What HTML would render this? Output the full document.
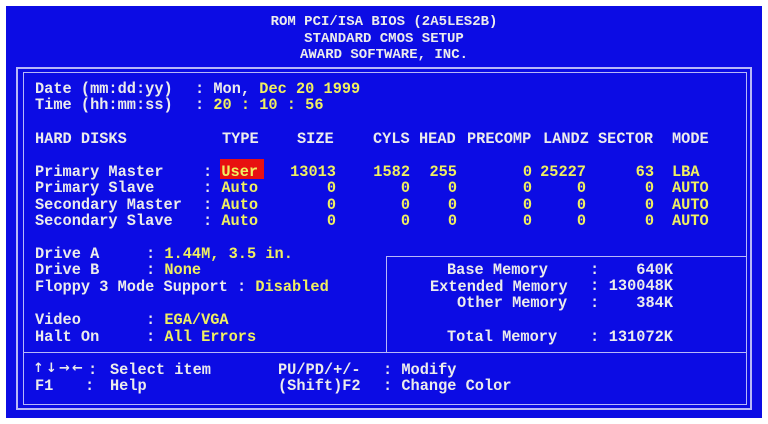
<!DOCTYPE html>
<html><head><style>
body{margin:0;width:768px;height:424px;background:#fff;position:relative;overflow:hidden;font-family:"Liberation Mono",monospace;font-weight:bold;font-size:15.3px}
#s{position:absolute;left:6px;top:6px;width:756px;height:412px;background:#0c0ce4}
.t{position:absolute;color:#ececec;white-space:pre;line-height:16.4px}
.y{color:#f0f060}
.r{position:absolute;color:#f0f060;white-space:pre;line-height:16.4px;text-align:right}
.l{position:absolute;background:#b8b8f8}
.a{position:absolute;color:#ececec;font-family:"DejaVu Sans",sans-serif;font-size:13px;top:361px;line-height:16px}
</style></head><body>
<div id="s"></div>
<div class="l" style="left:16px;top:67px;width:736px;height:2px"></div>
<div class="l" style="left:16px;top:67px;width:2px;height:343px"></div>
<div class="l" style="left:750px;top:67px;width:2px;height:343px"></div>
<div class="l" style="left:16px;top:408px;width:736px;height:2px"></div>
<div class="l" style="left:23px;top:72px;width:724px;height:1px"></div>
<div class="l" style="left:23px;top:72px;width:1px;height:333px"></div>
<div class="l" style="left:746px;top:72px;width:1px;height:333px"></div>
<div class="l" style="left:23px;top:404px;width:724px;height:1px"></div>
<div class="l" style="left:23px;top:352px;width:724px;height:1px"></div>
<div class="l" style="left:386px;top:256px;width:361px;height:1px"></div>
<div class="l" style="left:386px;top:256px;width:1px;height:97px"></div>

<div class="t" style="left:0;width:768px;text-align:center;top:14px;font-size:14px">ROM PCI/ISA BIOS (2A5LES2B)</div>
<div class="t" style="left:0;width:768px;text-align:center;top:31px;font-size:14px">STANDARD CMOS SETUP</div>
<div class="t" style="left:0;width:768px;text-align:center;top:47px;font-size:14px">AWARD SOFTWARE, INC.</div>

<div class="t" style="left:35px;top:81px">Date (mm:dd:yy)</div>
<div class="t" style="left:195px;top:81px">: Mon, <span class="y">Dec 20 1999</span></div>
<div class="t" style="left:35px;top:97px">Time (hh:mm:ss)</div>
<div class="t" style="left:195px;top:97px">: <span class="y">20 : 10 : 56</span></div>

<div class="t" style="left:35px;top:131px">HARD DISKS</div>
<div class="t" style="left:222px;top:131px">TYPE</div>
<div class="t" style="left:297px;top:131px">SIZE</div>
<div class="t" style="left:373px;top:131px">CYLS</div>
<div class="t" style="left:419px;top:131px">HEAD</div>
<div class="t" style="left:467px;top:131px">PRECOMP</div>
<div class="t" style="left:543px;top:131px">LANDZ</div>
<div class="t" style="left:598px;top:131px">SECTOR</div>
<div class="t" style="left:672px;top:131px">MODE</div>

<div style="position:absolute;left:220px;top:159px;width:44px;height:20px;background:#e81010"></div>
<div class="t" style="left:35px;top:164px">Primary Master<br>Primary Slave<br>Secondary Master<br>Secondary Slave</div>
<div class="t" style="left:203px;top:164px">: <span class="y">User</span><br>: <span class="y">Auto</span><br>: <span class="y">Auto</span><br>: <span class="y">Auto</span></div>

<div class="r" style="right:432px;top:164px">13013<br>0<br>0<br>0</div>
<div class="r" style="right:358px;top:164px">1582<br>0<br>0<br>0</div>
<div class="r" style="right:311px;top:164px">255<br>0<br>0<br>0</div>
<div class="r" style="right:236px;top:164px">0<br>0<br>0<br>0</div>
<div class="r" style="right:182px;top:164px">25227<br>0<br>0<br>0</div>
<div class="r" style="right:114px;top:164px">63<br>0<br>0<br>0</div>
<div class="t y" style="left:672px;top:164px">LBA<br>AUTO<br>AUTO<br>AUTO</div>

<div class="t" style="left:35px;top:246px">Drive A</div>
<div class="t" style="left:146px;top:246px">: <span class="y">1.44M, 3.5 in.</span></div>
<div class="t" style="left:35px;top:262px">Drive B</div>
<div class="t" style="left:146px;top:262px">: <span class="y">None</span></div>
<div class="t" style="left:35px;top:279px">Floppy 3 Mode Support : <span class="y">Disabled</span></div>
<div class="t" style="left:35px;top:312px">Video</div>
<div class="t" style="left:146px;top:312px">: <span class="y">EGA/VGA</span></div>
<div class="t" style="left:35px;top:329px">Halt On</div>
<div class="t" style="left:146px;top:329px">: <span class="y">All Errors</span></div>

<div class="t" style="left:447px;top:262px">Base Memory</div>
<div class="t" style="left:430px;top:279px">Extended Memory</div>
<div class="t" style="left:457px;top:295px">Other Memory</div>
<div class="t" style="left:447px;top:329px">Total Memory</div>
<div class="t" style="left:590px;top:262px">:<br>:<br>:</div>
<div class="t" style="left:590px;top:329px">:</div>
<div class="t" style="right:95px;top:262px;text-align:right">640K<br>130048K<br>384K</div>
<div class="t" style="right:95px;top:329px">131072K</div>

<div class="a" style="left:33px">↑</div>
<div class="a" style="left:46px">↓</div>
<div class="a" style="left:59px">→</div>
<div class="a" style="left:72px">←</div>
<div class="t" style="left:88px;top:362px">:</div>
<div class="t" style="left:110px;top:362px">Select item</div>
<div class="t" style="left:35px;top:378px">F1</div>
<div class="t" style="left:85px;top:378px">:</div>
<div class="t" style="left:110px;top:378px">Help</div>
<div class="t" style="left:278px;top:362px">PU/PD/+/-</div>
<div class="t" style="left:278px;top:378px">(Shift)F2</div>
<div class="t" style="left:383px;top:362px">: Modify</div>
<div class="t" style="left:383px;top:378px">: Change Color</div>
</body></html>
